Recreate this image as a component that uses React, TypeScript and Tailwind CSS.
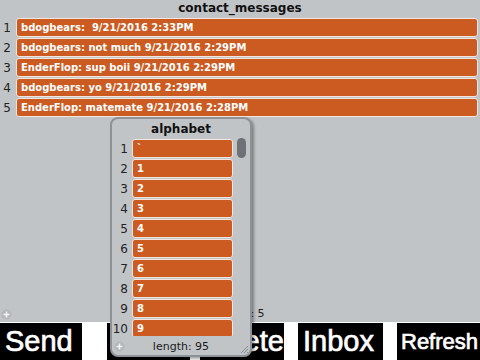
import React from "react";

const messages = [
  "bdogbears:  9/21/2016 2:33PM",
  "bdogbears: not much 9/21/2016 2:29PM",
  "EnderFlop: sup boii 9/21/2016 2:29PM",
  "bdogbears: yo 9/21/2016 2:29PM",
  "EnderFlop: matemate 9/21/2016 2:28PM",
];

const alphabet = ["`", "1", "2", "3", "4", "5", "6", "7", "8", "9", "0"];

function PlusIcon() {
  return (
    <svg width="11" height="11" viewBox="0 0 11 11">
      <circle cx="5.5" cy="5.5" r="5" fill="#b3b6ba" />
      <path d="M5.5 2.5v6M2.5 5.5h6" stroke="#f4f4f4" strokeWidth="1.6" />
    </svg>
  );
}

function Cell({ text }: { text: string }) {
  return (
    <div className="flex-1 h-[19px] rounded-[3px] border border-[#f3e6de] bg-[#cc5b22] pl-[4px] text-[10px] font-bold leading-[17px] text-white whitespace-pre overflow-hidden">
      {text}
    </div>
  );
}

export default function App() {
  return (
    <div
      className="relative w-[480px] h-[360px] overflow-hidden bg-white"
      style={{ fontFamily: '"DejaVu Sans", Verdana, sans-serif' }}
    >
      {/* main list watcher */}
      <div className="h-[322px] bg-[#c1c4c7] flex flex-col">
        <div className="h-[18px] text-center text-[12px] font-bold leading-[17px] text-[#111]">
          contact_messages
        </div>
        <div className="flex flex-col gap-[1px]">
          {messages.map((m, i) => (
            <div key={i} className="flex items-center pr-[2px]">
              <div className="w-[16px] pr-[5px] text-right text-[12px] text-[#222]">{i + 1}</div>
              <Cell text={m} />
            </div>
          ))}
        </div>
        <div className="mt-auto h-[16px] flex items-center relative">
          <div className="pl-[1px]">
            <PlusIcon />
          </div>
          <div className="absolute inset-0 text-center text-[11px] leading-[16px] text-[#222]">length: 5</div>
        </div>
      </div>

      {/* buttons */}
      <div
        className="flex mt-[1px] h-[37px] text-white text-[29px] leading-[37px] [-webkit-text-stroke:0.7px_white]"
        style={{ fontFamily: '"Liberation Sans", Arial, sans-serif' }}
      >
        <div className="w-[82px] bg-black pl-[5px]">Send</div>
        <div className="w-[25px]" />
        <div className="w-[83px] bg-black" />
        <div className="w-[10px]" />
        <div className="w-[84px] bg-black text-right pr-[3px] overflow-hidden whitespace-nowrap">Delete</div>
        <div className="w-[14px]" />
        <div className="w-[85px] bg-black pl-[5px]">Inbox</div>
        <div className="w-[14px]" />
        <div className="flex-1 bg-black pl-[4px] text-[22px] whitespace-nowrap overflow-hidden">Refresh</div>
      </div>

      {/* alphabet watcher popup */}
      <div className="absolute left-[110px] top-[117px] w-[142px] h-[240px] rounded-[8px] border-2 border-[#8e9195] bg-[#c1c4c7] shadow-[2px_2px_3px_rgba(0,0,0,0.35)] flex flex-col">
        <div className="h-[19px] text-center text-[12px] font-bold leading-[20px] text-[#111]">alphabet</div>
        <div className="flex">
          <div className="h-[198px] overflow-hidden flex-1 pt-[1px]">
            <div className="flex flex-col gap-[1px]">
              {alphabet.map((a, i) => (
                <div key={i} className="flex items-center">
                  <div className="w-[20px] pr-[4px] text-right text-[12px] text-[#222]">{i + 1}</div>
                  <Cell text={a} />
                </div>
              ))}
            </div>
          </div>
          <div className="w-[17px] flex justify-center">
            <div className="w-[9px] h-[20px] rounded-[5px] bg-[#6e7175]" />
          </div>
        </div>
        <div className="mt-auto h-[20px] flex items-center relative">
          <div className="pl-[2px] pt-[2px]">
            <PlusIcon />
          </div>
          <div className="absolute left-[18px] right-[18px] top-[3px] text-center text-[11px] leading-[16px] text-[#1a1a1a]">length: 95</div>
          <svg className="absolute right-[1px] bottom-[1px]" width="10" height="10" viewBox="0 0 10 10">
            <path d="M9 2L2 9M9 5L5 9M9 8L8 9" stroke="#8a8d91" strokeWidth="1" />
          </svg>
        </div>
      </div>
    </div>
  );
}
